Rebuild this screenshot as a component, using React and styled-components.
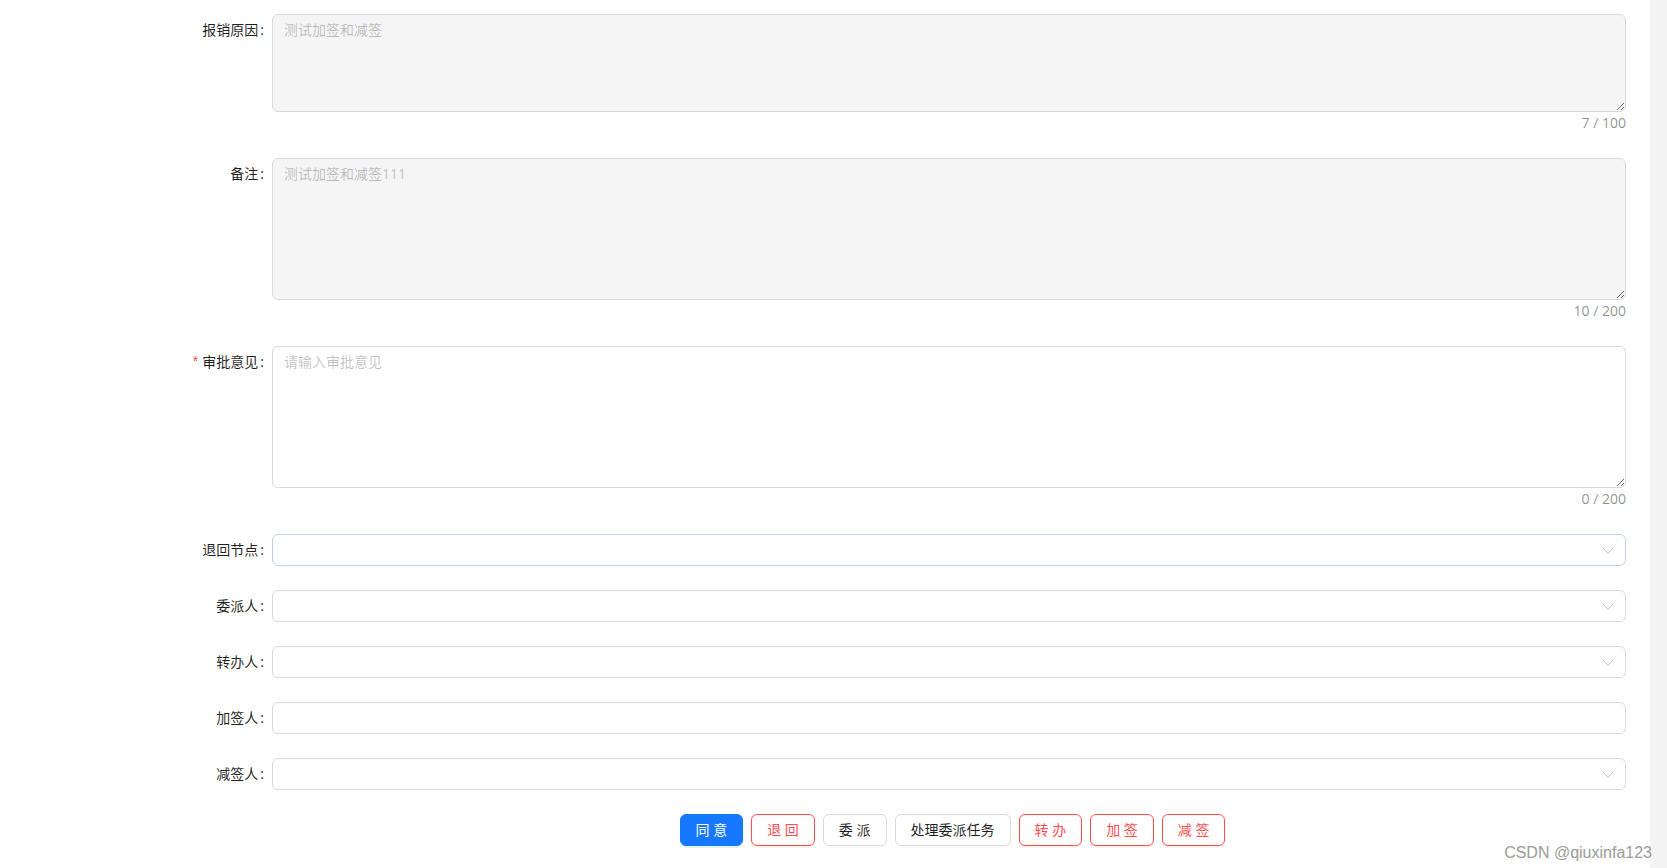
import React from "react";
import styled, { createGlobalStyle } from "styled-components";

const GlobalStyle = createGlobalStyle`
  html, body { margin: 0; padding: 0; background: #fff; }
  body {
    font-family: "Open Sans", "Noto Sans CJK SC", sans-serif;
    font-size: 14px;
    color: rgba(0, 0, 0, 0.88);
  }
  * { box-sizing: border-box; }
`;

const Page = styled.div`
  display: flex;
  min-height: 100vh;
  position: relative;
`;

const Main = styled.main`
  flex: 1;
  padding-top: 14px;
`;

const ScrollStrip = styled.div`
  width: 17px;
  flex: none;
  background: #f3f3f3;
`;

const Form = styled.form`
  display: flex;
  flex-direction: column;
`;

const FormItem = styled.div`
  display: grid;
  grid-template-columns: 272px 1354px;
  margin-bottom: 24px;
`;

const Label = styled.label`
  display: flex;
  justify-content: flex-end;
  align-items: center;
  height: 32px;
  padding-bottom: 2px;
  font-size: 14px;
  color: rgba(0, 0, 0, 0.88);
  white-space: nowrap;
  &::after {
    content: ":";
    margin: 0 8px 0 2px;
  }
`;

const Required = styled.span`
  color: #ff4d4f;
  margin-right: 4px;
  font-family: SimSong, "Liberation Sans", sans-serif;
  font-size: 14px;
`;

const Control = styled.div`
  display: flex;
  flex-direction: column;
`;

const TextArea = styled.textarea`
  display: block;
  width: 100%;
  height: ${(p) => p.$rows * 22 + 10}px;
  padding: 4px 11px;
  border: 1px solid #d9d9d9;
  border-radius: 6px;
  font-family: inherit;
  font-size: 14px;
  line-height: 22px;
  resize: vertical;
  outline: none;
  background: ${(p) => (p.disabled ? "#f5f5f5" : "#fff")};
  color: ${(p) => (p.disabled ? "rgba(0,0,0,0.25)" : "rgba(0,0,0,0.88)")};
  -webkit-text-fill-color: ${(p) =>
    p.disabled ? "rgba(0,0,0,0.25)" : "rgba(0,0,0,0.88)"};
  &::placeholder {
    color: rgba(0, 0, 0, 0.25);
    -webkit-text-fill-color: rgba(0, 0, 0, 0.25);
  }
`;

const Count = styled.div`
  text-align: right;
  line-height: 22px;
  height: 22px;
  font-size: 14px;
  color: rgba(0, 0, 0, 0.45);
`;

const SelectBox = styled.div`
  display: flex;
  align-items: center;
  justify-content: flex-end;
  height: 32px;
  padding: 0 11px;
  border: 1px solid ${(p) => (p.$hover ? "#bfd0e6" : "#d9d9d9")};
  border-radius: 6px;
  background: #fff;
`;

const Arrow = styled.svg`
  width: 12px;
  height: 12px;
  display: block;
`;

const ButtonRow = styled.div`
  display: flex;
  justify-content: center;
  gap: 8px;
  padding-left: 7px;
`;

const Button = styled.button`
  height: 32px;
  padding: 0 15px;
  border-radius: 6px;
  font-family: inherit;
  font-size: 14px;
  line-height: 30px;
  cursor: pointer;
  white-space: nowrap;
  border: 1px solid
    ${(p) =>
      p.$variant === "primary"
        ? "#1677ff"
        : p.$variant === "danger"
        ? "#ff4d4f"
        : "#d9d9d9"};
  background: ${(p) => (p.$variant === "primary" ? "#1677ff" : "#fff")};
  color: ${(p) =>
    p.$variant === "primary"
      ? "#fff"
      : p.$variant === "danger"
      ? "#ff4d4f"
      : "rgba(0,0,0,0.88)"};
  box-shadow: ${(p) =>
    p.$variant === "primary"
      ? "0 2px 0 rgba(5,145,255,0.1)"
      : p.$variant === "danger"
      ? "0 2px 0 rgba(255,38,5,0.06)"
      : "0 2px 0 rgba(0,0,0,0.02)"};
`;

const Watermark = styled.div`
  position: absolute;
  right: 15px;
  bottom: 8px;
  font-family: "Liberation Sans", Arial, sans-serif;
  font-size: 16px;
  line-height: 18px;
  color: #9a9a9a;
  pointer-events: none;
`;

const ChevronDown = () => (
  <Arrow viewBox="0 0 12 12" fill="none">
    <polyline
      points="1,4 6,9 11,4"
      stroke="rgba(0,0,0,0.25)"
      strokeWidth="1"
      strokeLinejoin="round"
    />
  </Arrow>
);

const textareas = [
  { label: "报销原因", value: "测试加签和减签", rows: 4, max: 100, disabled: true },
  { label: "备注", value: "测试加签和减签111", rows: 6, max: 200, disabled: true },
  {
    label: "审批意见",
    value: "",
    placeholder: "请输入审批意见",
    rows: 6,
    max: 200,
    required: true,
  },
];

const selects = [
  { label: "退回节点", arrow: true, hover: true },
  { label: "委派人", arrow: true },
  { label: "转办人", arrow: true },
  { label: "加签人", arrow: false },
  { label: "减签人", arrow: true },
];

const buttons = [
  { text: "同 意", variant: "primary" },
  { text: "退 回", variant: "danger" },
  { text: "委 派", variant: "default" },
  { text: "处理委派任务", variant: "default" },
  { text: "转 办", variant: "danger" },
  { text: "加 签", variant: "danger" },
  { text: "减 签", variant: "danger" },
];

export default function App() {
  return (
    <>
      <GlobalStyle />
      <Page>
        <Main>
          <Form onSubmit={(e) => e.preventDefault()}>
            {textareas.map((t) => (
              <FormItem key={t.label}>
                <Label>
                  {t.required && <Required>*</Required>}
                  {t.label}
                </Label>
                <Control>
                  <TextArea
                    $rows={t.rows}
                    disabled={t.disabled}
                    defaultValue={t.value}
                    placeholder={t.placeholder}
                  />
                  <Count>
                    {t.value.length} / {t.max}
                  </Count>
                </Control>
              </FormItem>
            ))}
            {selects.map((s) => (
              <FormItem key={s.label}>
                <Label>{s.label}</Label>
                <Control>
                  <SelectBox $hover={s.hover}>{s.arrow && <ChevronDown />}</SelectBox>
                </Control>
              </FormItem>
            ))}
            <FormItem>
              <div />
              <ButtonRow>
                {buttons.map((b) => (
                  <Button key={b.text} type="button" $variant={b.variant}>
                    {b.text}
                  </Button>
                ))}
              </ButtonRow>
            </FormItem>
          </Form>
        </Main>
        <ScrollStrip />
        <Watermark>CSDN @qiuxinfa123</Watermark>
      </Page>
    </>
  );
}
